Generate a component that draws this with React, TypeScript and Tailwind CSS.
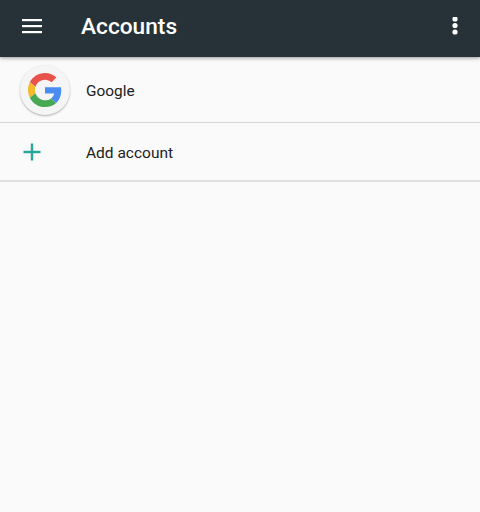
const App = () => {
  return (
    <div className="h-[512px] w-[480px] overflow-hidden bg-[#fafafa] font-['Roboto',sans-serif]">
      {/* Toolbar */}
      <div className="relative flex h-[57px] items-center bg-[#263238] pb-[3px] shadow-[0_1px_4px_rgba(0,0,0,0.4)]">
        <svg className="ml-[22px] h-[16px] w-[20px]" viewBox="0 0 20 16" fill="#ffffff">
          <rect x="0" y="0" width="20" height="2.2" />
          <rect x="0" y="6" width="20" height="2.2" />
          <rect x="0" y="12" width="20" height="2.2" />
        </svg>
        <span className="ml-[39px] text-[22.7px] font-medium text-white">Accounts</span>
        <svg className="ml-auto mr-[21px] h-[20px] w-[8px]" viewBox="0 0 8 20" fill="#ffffff">
          <circle cx="4" cy="2" r="2.6" />
          <circle cx="4" cy="8.5" r="2.6" />
          <circle cx="4" cy="15" r="2.6" />
        </svg>
      </div>

      {/* Google row */}
      <div className="flex h-[66px] items-center border-b border-[#d6d6d6]">
        <div className="ml-[20px] flex h-[50px] w-[50px] items-center justify-center rounded-full bg-[#f5f5f5] shadow-[0_1px_2px_rgba(0,0,0,0.3)]">
          <svg className="h-[34px] w-[34px]" viewBox="0 0 48 48">
            <path fill="#E9524A" d="M24 9.5c3.54 0 6.71 1.22 9.21 3.6l6.85-6.85C35.9 2.38 30.47 0 24 0 14.62 0 6.51 5.38 2.56 13.22l7.98 6.19C12.43 13.72 17.74 9.5 24 9.5z" />
            <path fill="#4A8CF0" d="M46.98 24.55c0-1.57-.15-3.09-.38-4.55H24v9.02h12.94c-.58 2.96-2.26 5.48-4.78 7.18l7.73 6c4.51-4.18 7.09-10.36 7.09-17.65z" />
            <path fill="#F4B92C" d="M10.53 28.59c-.48-1.45-.76-2.99-.76-4.59s.27-3.14.76-4.59l-7.98-6.19C.92 16.46 0 20.12 0 24c0 3.88.92 7.54 2.56 10.78l7.97-6.19z" />
            <path fill="#47A954" d="M24 48c6.48 0 11.93-2.13 15.89-5.81l-7.73-6c-2.15 1.45-4.92 2.3-8.16 2.3-6.26 0-11.57-4.22-13.47-9.91l-7.98 6.19C6.51 42.62 14.62 48 24 48z" />
          </svg>
        </div>
        <span className="ml-[16px] pt-[4px] text-[15.4px] text-[#212121]">Google</span>
      </div>

      {/* Add account row */}
      <div className="flex h-[59px] items-center border-b-2 border-[#e0e0e0]">
        <svg className="ml-[23px] h-[18px] w-[18px]" viewBox="0 0 18 18" fill="#26a69a">
          <rect x="0.5" y="7.8" width="17" height="2.4" />
          <rect x="7.8" y="0.5" width="2.4" height="17" />
        </svg>
        <span className="ml-[45px] pt-[4px] text-[15.5px] text-[#212121]">Add account</span>
      </div>
    </div>
  );
};

export default App;
